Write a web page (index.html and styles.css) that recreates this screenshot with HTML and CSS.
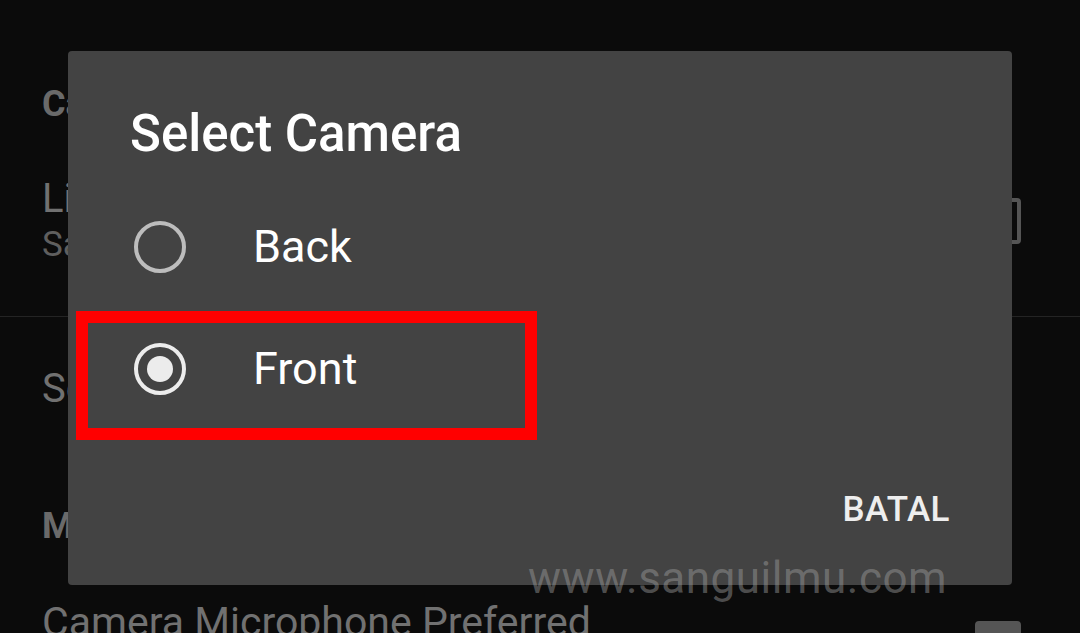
FILE: index.html
```html
<!DOCTYPE html>
<html>
<head>
<meta charset="utf-8">
<link rel="stylesheet" href="styles.css">
</head>
<body>
<div class="settings">
  <div class="category cat-first">Camera</div>
  <div class="item item-first">
    <div class="item-text">
      <div class="item-title">Live View</div>
      <div class="item-summary">Saat kamera aktif</div>
    </div>
    <div class="checkbox"></div>
  </div>
  <div class="divider"></div>
  <div class="item item-single">
    <div class="item-text">
      <div class="item-title">Select Camera</div>
    </div>
  </div>
  <div class="category cat-second">Microphone</div>
  <div class="item item-last">
    <div class="item-text">
      <div class="item-title">Camera Microphone Preferred</div>
      <div class="item-summary">Gunakan mikrofon kamera</div>
    </div>
    <div class="checkbox checked"></div>
  </div>
</div>

<div class="dialog">
  <div class="dialog-title">Select Camera</div>
  <div class="option">
    <span class="radio"></span>
    <span class="option-label">Back</span>
  </div>
  <div class="option">
    <span class="radio radio-on"><span class="dot"></span></span>
    <span class="option-label">Front</span>
  </div>
  <div class="dialog-actions">
    <span class="action">BATAL</span>
  </div>
  <div class="highlight"></div>
</div>

<div class="watermark">www.sanguilmu.com</div>
</body>
</html>
```

FILE: styles.css
```css
html, body {
  margin: 0;
  padding: 0;
}
body {
  width: 1080px;
  height: 633px;
  overflow: hidden;
  background: #0b0b0b;
  font-family: Roboto, "Liberation Sans", sans-serif;
  position: relative;
}

.settings {
  display: flex;
  flex-direction: column;
  padding-left: 42px;
  padding-right: 59px;
}
.category {
  font-size: 36px;
  line-height: 36px;
  font-weight: 700;
  color: #6a6a6a;
  height: 36px;
}
.cat-first { margin-top: 86px; }
.cat-second { margin-top: 95px; }

.item {
  display: flex;
  align-items: center;
  justify-content: space-between;
}
.item-first { margin-top: 53px; }
.item-single { margin-top: 48px; }
.item-last { margin-top: 54px; }
.item-title {
  font-size: 40px;
  line-height: 48px;
  color: #717171;
  white-space: nowrap;
}
.item-last .item-title {
  font-size: 41px;
}
.item-summary {
  font-size: 35px;
  line-height: 44px;
  color: #5f5f5f;
  white-space: nowrap;
}
.divider {
  height: 1px;
  background: #242424;
  margin: 49px -59px 0 -42px;
}
.checkbox {
  width: 38px;
  height: 38px;
  border: 4px solid #555;
  border-radius: 4px;
  flex: none;
}
.checkbox.checked {
  background: #555;
}

.dialog {
  position: absolute;
  left: 68px;
  top: 51px;
  width: 944px;
  height: 534px;
  background: #434343;
  border-radius: 4px;
  display: flex;
  flex-direction: column;
  box-sizing: border-box;
  padding-top: 53px;
}
.dialog-title {
  font-size: 51px;
  line-height: 60px;
  font-weight: 500;
  color: #ffffff;
  padding-left: 62px;
  margin-bottom: 22px;
}
.option {
  height: 122px;
  display: flex;
  align-items: center;
  padding-left: 66px;
}
.radio {
  width: 44px;
  height: 44px;
  border: 4px solid #bdbdbd;
  border-radius: 50%;
  display: flex;
  align-items: center;
  justify-content: center;
  flex: none;
}
.radio-on {
  border-color: #ececec;
}
.dot {
  width: 26px;
  height: 26px;
  border-radius: 50%;
  background: #ececec;
}
.option-label {
  margin-left: 67px;
  font-size: 45px;
  line-height: 52px;
  color: #ffffff;
}
.dialog-actions {
  display: flex;
  justify-content: flex-end;
  padding-right: 62px;
  margin-top: 58px;
}
.action {
  font-size: 35px;
  line-height: 44px;
  font-weight: 500;
  color: #eeeeee;
  letter-spacing: 0.5px;
}
.highlight {
  position: absolute;
  left: 8px;
  top: 260px;
  width: 437px;
  height: 105px;
  border: 12px solid #ff0000;
}

.watermark {
  position: absolute;
  left: 528px;
  top: 556px;
  font-size: 44px;
  line-height: 44px;
  letter-spacing: 0.5px;
  color: rgba(160, 160, 160, 0.45);
  white-space: nowrap;
}
```
